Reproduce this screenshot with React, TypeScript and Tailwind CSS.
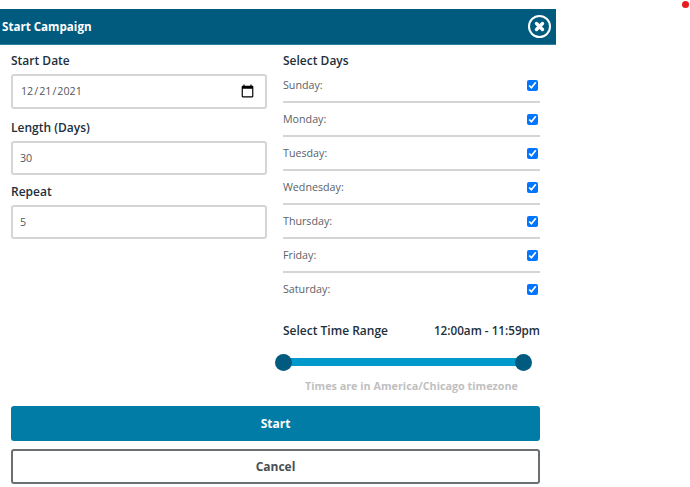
const days = ['Sunday', 'Monday', 'Tuesday', 'Wednesday', 'Thursday', 'Friday', 'Saturday'];

function Field({ label, type, value, inputClass }: { label: string; type: string; value: string; inputClass: string }) {
  return (
    <div className="flex flex-col">
      <label className="h-[19px] text-[12px] leading-[19px] font-semibold text-[#212f3c]">{label}</label>
      <input
        type={type}
        defaultValue={value}
        className={`mt-[4px] w-full rounded-[3px] border-2 border-[#d5d5d5] bg-white pl-[7px] pr-[8px] text-[10.7px] text-[#50565c] outline-none [&::-webkit-calendar-picker-indicator]:h-[15px] [&::-webkit-calendar-picker-indicator]:w-[15px] [&::-webkit-calendar-picker-indicator]:m-0 ${inputClass}`}
      />
    </div>
  );
}

export default function App() {
  return (
    <div className="relative h-[487px] w-[690px] overflow-hidden bg-white font-['Open_Sans',sans-serif]">
      <div className="absolute left-[682px] top-[1px] h-[7px] w-[7px] rounded-full bg-[#e81c1c]" />
      <div className="w-[556px] pt-[9px]">
        <div className="flex h-[36px] items-center justify-between border-b border-[#2f7f9f] bg-[#005b7f] pl-[2px] pr-[5px]">
          <h1 className="text-[11.6px] font-bold text-white">Start Campaign</h1>
          <button className="flex h-[23px] w-[23px] items-center justify-center rounded-full border-2 border-white">
            <svg width="11" height="11" viewBox="0 0 11 11">
              <path d="M2.5 2.5 8.5 8.5M8.5 2.5 2.5 8.5" stroke="#fff" strokeWidth="3.4" strokeLinecap="round" />
            </svg>
          </button>
        </div>
        <div className="px-[11px]">
          <div className="flex gap-[16px] pt-[6px]">
            <div className="flex w-[256px] flex-col">
              <Field label="Start Date" type="date" value="2021-12-21" inputClass="h-[35px] mb-[9px]" />
              <Field label="Length (Days)" type="text" value="30" inputClass="h-[34px] mb-[7px]" />
              <Field label="Repeat" type="text" value="5" inputClass="h-[34px]" />
            </div>
            <div className="w-[257px]">
              <div className="h-[19px] text-[12px] leading-[19px] font-semibold text-[#212f3c]">Select Days</div>
              <div>
                {days.map((day, i) => (
                  <div
                    key={day}
                    className={`flex items-center justify-between border-b-2 ${i === 0 ? 'h-[33px]' : 'h-[34px]'} ${i < 6 ? 'border-[#d5d5d5]' : 'border-transparent'}`}
                  >
                    <span className="text-[10.7px] text-[#5a6268]">{day}:</span>
                    <input type="checkbox" defaultChecked className="mr-[2px] h-[11px] w-[11px] accent-[#0075ff]" />
                  </div>
                ))}
              </div>
              <div className="mt-[15px] flex items-center justify-between text-[12px] font-semibold text-[#212f3c]">
                <span>Select Time Range</span>
                <span className="text-[11.7px]">12:00am - 11:59pm</span>
              </div>
              <div className="relative ml-[-8px] mr-[8px] mt-[14px] flex h-[17px] items-center justify-between">
                <div className="absolute left-[8px] right-[8px] top-[4px] h-[8px] bg-[#0099cc]" />
                <div className="relative h-[17px] w-[17px] rounded-full bg-[#005b7f]" />
                <div className="relative h-[17px] w-[17px] rounded-full bg-[#005b7f]" />
              </div>
              <p className="mt-[7px] text-center text-[10.8px] font-bold text-[#bfbfbf]">Times are in America/Chicago timezone</p>
            </div>
          </div>
          <div className="mt-[12px] flex w-[529px] flex-col gap-[8px]">
            <button className="h-[35px] rounded-[3px] bg-[#007ca6] text-[12px] font-bold text-white">Start</button>
            <button className="h-[35px] rounded-[3px] border-2 border-[#6c6f72] bg-white text-[12px] font-bold text-[#4a4f54]">Cancel</button>
          </div>
        </div>
      </div>
    </div>
  );
}
